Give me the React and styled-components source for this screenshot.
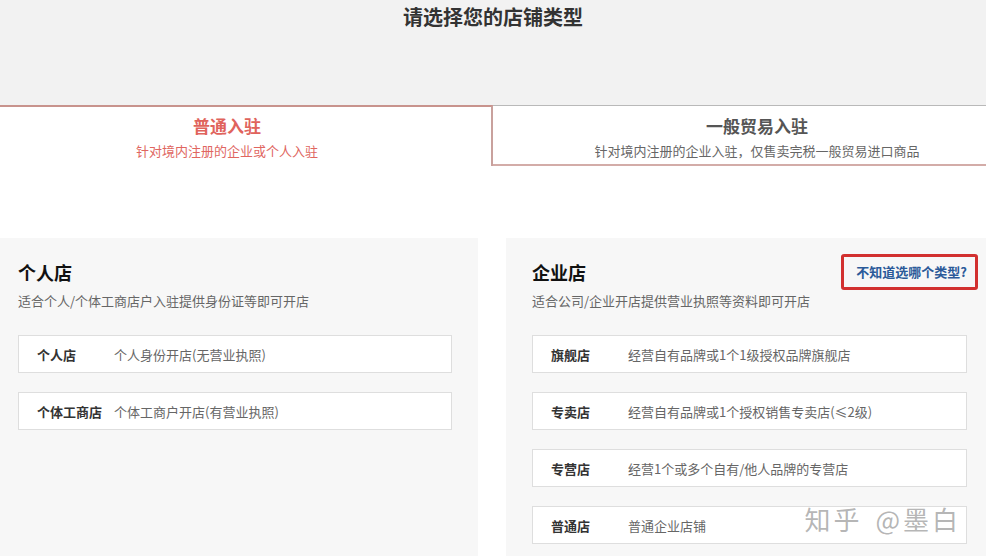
import styled, { createGlobalStyle } from "styled-components";

const GlobalStyle = createGlobalStyle`
  html, body {
    margin: 0;
    padding: 0;
    background: #fff;
    font-family: "Noto Sans CJK SC", "Noto Sans", sans-serif;
  }
`;

const personal = [
  { name: "个人店", desc: "个人身份开店(无营业执照)" },
  { name: "个体工商店", desc: "个体工商户开店(有营业执照)" },
];

const company = [
  { name: "旗舰店", desc: "经营自有品牌或1个1级授权品牌旗舰店" },
  { name: "专卖店", desc: "经营自有品牌或1个授权销售专卖店(≤2级)" },
  { name: "专营店", desc: "经营1个或多个自有/他人品牌的专营店" },
  { name: "普通店", desc: "普通企业店铺" },
];

function App() {
  return (
    <Page>
      <GlobalStyle />
      <Header>
        <Title>请选择您的店铺类型</Title>
      </Header>
      <Tabs>
        <Tab $active>
          <TabTitle $active>普通入驻</TabTitle>
          <TabDesc $active>针对境内注册的企业或个人入驻</TabDesc>
        </Tab>
        <Tab>
          <TabTitle>一般贸易入驻</TabTitle>
          <TabDesc>针对境内注册的企业入驻，仅售卖完税一般贸易进口商品</TabDesc>
        </Tab>
      </Tabs>
      <Panels>
        <Panel $left>
          <PanelHead>
            <PanelTitle>个人店</PanelTitle>
          </PanelHead>
          <PanelDesc>适合个人/个体工商店户入驻提供身份证等即可开店</PanelDesc>
          <RowList>
            {personal.map((r) => (
              <Row key={r.name}>
                <RowName>{r.name}</RowName>
                <RowDesc>{r.desc}</RowDesc>
              </Row>
            ))}
          </RowList>
        </Panel>
        <Panel>
          <PanelHead>
            <PanelTitle>企业店</PanelTitle>
            <HelpLink href="#">不知道选哪个类型?</HelpLink>
          </PanelHead>
          <PanelDesc>适合公司/企业开店提供营业执照等资料即可开店</PanelDesc>
          <RowList>
            {company.map((r) => (
              <Row key={r.name}>
                <RowName>{r.name}</RowName>
                <RowDesc>{r.desc}</RowDesc>
              </Row>
            ))}
          </RowList>
          <Watermark>知乎 @墨白</Watermark>
        </Panel>
      </Panels>
    </Page>
  );
}

export default App;

const Page = styled.div`
  width: 986px;
  height: 556px;
  overflow: hidden;
  background: #fff;
`;

const Header = styled.div`
  height: 105px;
  background: #f2f2f2;
  display: flex;
  justify-content: center;
  box-sizing: border-box;
  padding-top: 4px;
`;

const Title = styled.h1`
  margin: 0;
  font-size: 20px;
  line-height: 26px;
  font-weight: 700;
  color: #333;
`;

const Tabs = styled.div`
  display: grid;
  grid-template-columns: 493px 1fr;
  height: 61px;
`;

const Tab = styled.div`
  box-sizing: border-box;
  background: #fff;
  display: flex;
  flex-direction: column;
  align-items: center;
  padding-top: ${(p) => (p.$active ? "7px" : "8px")};
  padding-right: ${(p) => (p.$active ? "37px" : "0")};
  padding-left: ${(p) => (p.$active ? "0" : "35px")};
  border-top: ${(p) => (p.$active ? "2px solid #c8938d" : "1px solid #b9b9b9")};
  border-right: ${(p) => (p.$active ? "2px solid #c9a19d" : "none")};
  border-bottom: ${(p) => (p.$active ? "none" : "2px solid #d3aca8")};
`;

const TabTitle = styled.div`
  font-size: 17px;
  line-height: 24px;
  font-weight: 700;
  color: ${(p) => (p.$active ? "#e0635c" : "#555")};
`;

const TabDesc = styled.div`
  font-size: 13px;
  line-height: 20px;
  margin-top: 3px;
  color: ${(p) => (p.$active ? "#e0665f" : "#666")};
`;

const Panels = styled.div`
  margin-top: 72px;
  display: flex;
  gap: 28px;
  height: 318px;
`;

const Panel = styled.div`
  position: relative;
  box-sizing: border-box;
  background: #f7f7f7;
  ${(p) => (p.$left ? "width: 478px;" : "flex: 1;")}
  padding: ${(p) => (p.$left ? "22px 26px 0 18px" : "22px 19px 0 26px")};
`;

const PanelHead = styled.div`
  display: flex;
  align-items: center;
  justify-content: space-between;
  height: 24px;
`;

const PanelTitle = styled.h2`
  margin: 0;
  font-size: 18px;
  line-height: 24px;
  font-weight: 700;
  color: #111;
`;

const HelpLink = styled.a`
  font-size: 13px;
  line-height: 20px;
  font-weight: 700;
  color: #2b5a99;
  text-decoration: none;
  padding: 5px 8px 5px 12px;
  margin-right: -11px;
  border: 3px solid #d2302f;
  border-radius: 3px;
`;

const PanelDesc = styled.p`
  margin: 7px 0 0;
  font-size: 13px;
  line-height: 20px;
  color: #666;
`;

const RowList = styled.div`
  margin-top: 24px;
  display: flex;
  flex-direction: column;
  gap: 19px;
`;

const Row = styled.div`
  box-sizing: border-box;
  height: 38px;
  background: #fff;
  border: 1px solid #dedede;
  display: flex;
  align-items: center;
  padding-left: 18px;
  font-size: 13px;
`;

const RowName = styled.span`
  width: 77px;
  flex-shrink: 0;
  font-weight: 700;
  color: #333;
`;

const RowDesc = styled.span`
  color: #666;
`;

const Watermark = styled.div`
  position: absolute;
  right: 25px;
  bottom: 22px;
  font-size: 26px;
  line-height: 30px;
  color: rgba(150, 150, 150, 0.7);
  text-shadow: 1px 1px 0 rgba(255, 255, 255, 0.9);
  letter-spacing: 3px;
  word-spacing: 4px;
  pointer-events: none;
`;
